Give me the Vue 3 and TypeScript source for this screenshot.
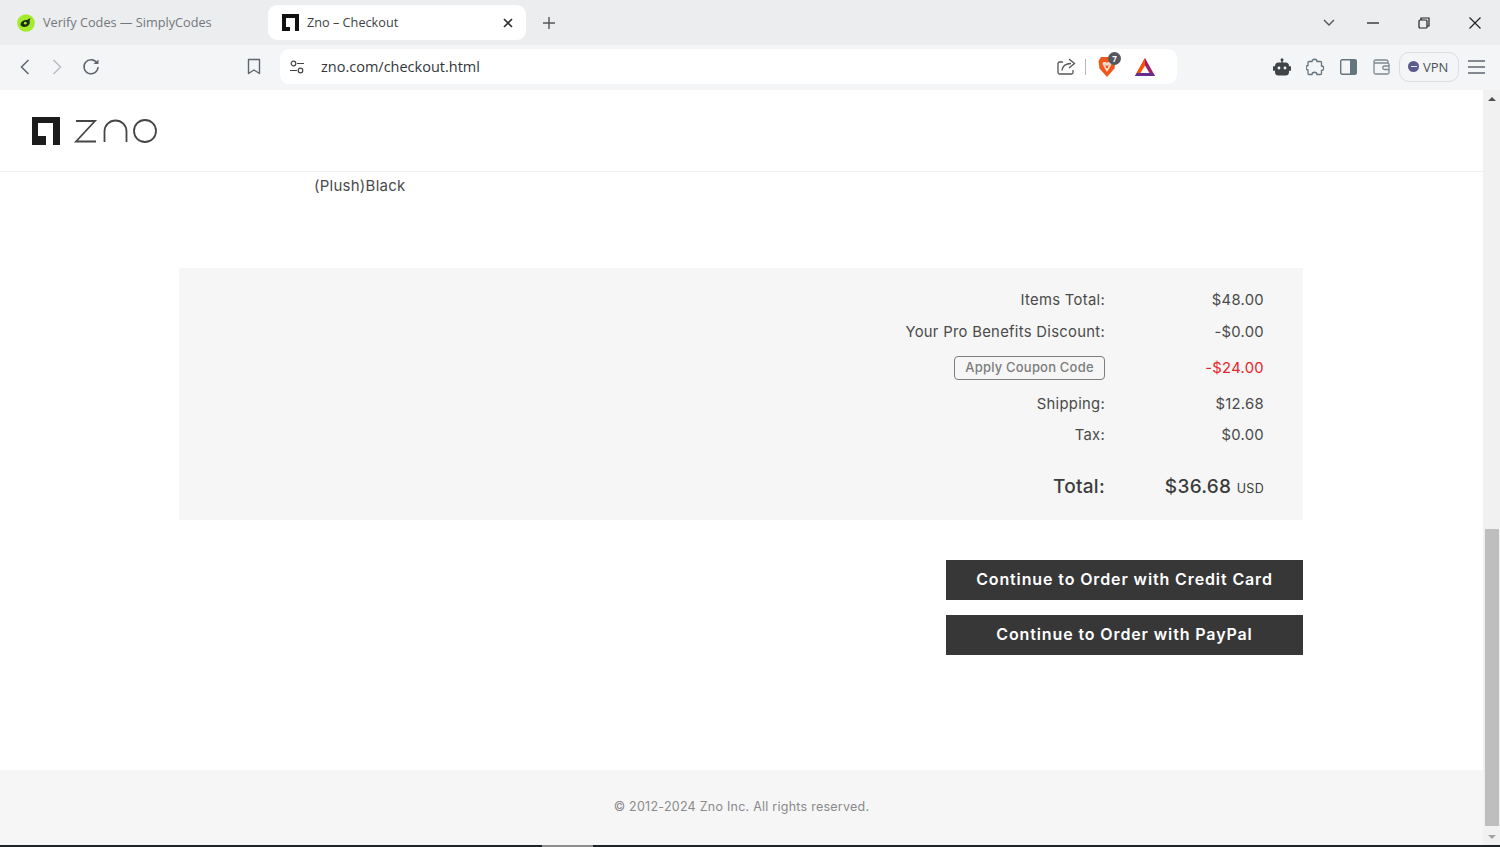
<script setup lang="ts">
interface Row { label: string; value: string; cls: string }
const rows: Row[] = [
  { label: 'Items Total:', value: '$48.00', cls: 'h-a' },
  { label: 'Your Pro Benefits Discount:', value: '-$0.00', cls: 'h-a' },
]
const rowsAfter: Row[] = [
  { label: 'Shipping:', value: '$12.68', cls: 'h-c' },
  { label: 'Tax:', value: '$0.00', cls: 'h-d' },
]
</script>

<template>
  <div class="window">
    <div class="tabstrip">
      <div class="tab inactive">
        <svg class="fav" viewBox="0 0 18 18" width="18" height="18">
          <circle cx="9" cy="9" r="8.800" fill="#a2ec2c" />
          <path d="M3.500 10c.8-3 4-4.300 6.500-4l3.500-2-1 3c1 2.200-.6 5.200-3.800 5.800-2.800.5-5.500-.7-5.200-2.800z" fill="#1d2b12" />
          <circle cx="8.300" cy="9.200" r="1.400" fill="#a2ec2c" />
        </svg>
        <span class="tabtitle muted">Verify Codes — SimplyCodes</span>
      </div>
      <div class="tab active">
        <svg class="fav" viewBox="0 0 17 17" width="17" height="17">
          <path d="M0 0h17v17h-4V4H4v9h4v4H0z" fill="#111" />
        </svg>
        <span class="tabtitle">Zno – Checkout</span>
        <svg class="tabclose" viewBox="0 0 10 10" width="10" height="10">
          <path d="M1 1l8 8M9 1l-8 8" stroke="#333" stroke-width="1.700" fill="none" />
        </svg>
      </div>
      <svg class="newtab" viewBox="0 0 12 12" width="12" height="12">
        <path d="M6 0v12M0 6h12" stroke="#555" stroke-width="1.400" fill="none" />
      </svg>
      <div class="strip-right">
        <svg viewBox="0 0 12 8" width="12" height="8"><path d="M1 1l5 5 5-5" stroke="#555" stroke-width="1.400" fill="none" /></svg>
        <svg class="min" viewBox="0 0 12 2" width="12" height="2"><path d="M0 1h12" stroke="#222" stroke-width="1.300" /></svg>
        <svg class="rest" viewBox="0 0 12 12" width="12" height="12">
          <path d="M3 3V1h8v8H9" stroke="#222" stroke-width="1.200" fill="none" />
          <rect x="1" y="3" width="8" height="8" rx="1" stroke="#222" stroke-width="1.200" fill="none" />
        </svg>
        <svg class="cls" viewBox="0 0 12 12" width="12" height="12"><path d="M.5.5l11 11M11.500.5l-11 11" stroke="#222" stroke-width="1.200" fill="none" /></svg>
      </div>
    </div>

    <div class="toolbar">
      <svg class="back" viewBox="0 0 10 16" width="10" height="16"><path d="M8.500 1L1.500 8l7 7" stroke="#5f6670" stroke-width="1.500" fill="none" /></svg>
      <svg class="fwd" viewBox="0 0 10 16" width="10" height="16"><path d="M1.500 1l7 7-7 7" stroke="#b9bec4" stroke-width="1.500" fill="none" /></svg>
      <svg class="reload" viewBox="0 0 18 18" width="18" height="18">
        <path d="M15 5.200A7 7 0 1 0 16 9" stroke="#5f6670" stroke-width="1.500" fill="none" />
        <path d="M11.500 6h5V1.500z" fill="#5f6670" />
      </svg>
      <svg class="bookmark" viewBox="0 0 14 17" width="14" height="17"><path d="M1.500 1.500h11v14L7 12l-5.500 3.500z" stroke="#5f6670" stroke-width="1.400" fill="none" stroke-linejoin="round" /></svg>
      <div class="omnibox">
        <svg class="tune" viewBox="0 0 14 14" width="14" height="14">
          <circle cx="3.500" cy="3.500" r="2.300" stroke="#444" stroke-width="1.200" fill="none" />
          <circle cx="10.500" cy="10.500" r="2.300" stroke="#444" stroke-width="1.200" fill="none" />
          <path d="M7 3.500h7M0 10.500h7" stroke="#444" stroke-width="1.200" />
        </svg>
        <span class="url">zno.com/checkout.html</span>
        <svg class="share" viewBox="0 0 19 17" width="19" height="17">
          <path d="M6 4H2.500A1.500 1.500 0 0 0 1 5.500v9A1.500 1.500 0 0 0 2.500 16h12a1.500 1.500 0 0 0 1.500-1.500V12" stroke="#555" stroke-width="1.300" fill="none" />
          <path d="M5 12.500C5.500 8 9 5.500 14 5.500M12 1l5.500 4.500L12 10" stroke="#555" stroke-width="1.300" fill="none" />
        </svg>
        <span class="sep"></span>
        <div class="brave">
          <svg viewBox="0 0 18 22" width="18" height="22">
            <path d="M3 1h12l2.500 4-1 7.500L9 21 1.500 12.500.5 5z" fill="#f0571f" />
            <path d="M5 6h3l1 1 1-1h3l.5 2-2 4-2.500 4-2.500-4-2-4z" fill="#fbd9c9" />
            <path d="M7.500 8.500L9 10l1.500-1.500-.5 3.500H8z" fill="#f0571f" />
          </svg>
          <span class="badge">7</span>
        </div>
        <svg class="bat" viewBox="0 0 20 18" width="20" height="18">
          <path d="M10 0l10 18H0z" fill="#9e1f63" />
          <path d="M10 0L0 18h5.500L10 9z" fill="#ff5000" />
          <path d="M0 18h20l-2-3H2z" fill="#662d91" />
          <path d="M10 7.500L14.500 15h-9z" fill="#fff" />
        </svg>
      </div>
      <div class="tools">
        <svg class="t-bot" viewBox="0 0 18 18" width="18" height="18">
          <circle cx="9" cy="1.800" r="1.500" fill="#3f4448" />
          <rect x="8.300" y="2" width="1.400" height="3" fill="#3f4448" />
          <rect x="2" y="4.500" width="14" height="13" rx="3.500" fill="#3f4448" />
          <rect x="0" y="8" width="2" height="5" rx="1" fill="#3f4448" />
          <rect x="16" y="8" width="2" height="5" rx="1" fill="#3f4448" />
          <circle cx="6" cy="10" r="1.400" fill="#f3f5f7" />
          <circle cx="12" cy="10" r="1.400" fill="#f3f5f7" />
        </svg>
        <svg class="t-puz" viewBox="0 0 18 18" width="18" height="18">
          <path d="M6 3.500c0-3 5-3 5 0h3.500a1 1 0 0 1 1 1V8c3 0 3 4.500 0 4.500v3a1 1 0 0 1-1 1h-3.500c0-3-5-3-5 0H3a1 1 0 0 1-1-1v-3.500c-2.500 0-2.500-4.500 0-4.500V4.500a1 1 0 0 1 1-1z" stroke="#66747e" stroke-width="1.300" fill="none" />
        </svg>
        <svg class="t-side" viewBox="0 0 17 16" width="17" height="16">
          <rect x=".7" y=".7" width="15.600" height="14.600" rx="1.500" stroke="#66747e" stroke-width="1.400" fill="none" />
          <rect x="10" y="1" width="6.500" height="14" fill="#66747e" />
        </svg>
        <svg class="t-wal" viewBox="0 0 17 16" width="17" height="16">
          <path d="M15 3.500v-1A1.500 1.500 0 0 0 13.500 1h-11A1.500 1.500 0 0 0 1 2.500v11A1.500 1.500 0 0 0 2.500 15h12a1.500 1.500 0 0 0 1.500-1.500v-8A1.500 1.500 0 0 0 14.500 4h-13" stroke="#7d8a93" stroke-width="1.300" fill="none" />
          <path d="M16 7h-4.500a1.500 1.500 0 0 0 0 3.500H16" stroke="#7d8a93" stroke-width="1.300" fill="none" />
        </svg>
        <div class="vpn">
          <span class="vpn-dot"><i></i></span>
          <span>VPN</span>
        </div>
        <svg class="t-menu" viewBox="0 0 17 14" width="17" height="14"><path d="M0 1h17M0 7h17M0 13h17" stroke="#5f6670" stroke-width="1.300" /></svg>
      </div>
    </div>

    <div class="viewport">
      <div class="page">
        <header class="site-header">
          <svg class="logo" viewBox="0 0 125 28" width="125" height="28" role="img" aria-label="zno">
            <path d="M0 0h28v28h-7V6H6v13h8v9H0z" fill="#1c1c1c" />
            <path d="M44 4h19L44 24.500h20" stroke="#454545" stroke-width="1.800" fill="none" />
            <path d="M72.500 25V14.500a11 11 0 0 1 22 0V25" stroke="#454545" stroke-width="1.800" fill="none" />
            <circle cx="113" cy="14" r="11" stroke="#454545" stroke-width="1.800" fill="none" />
          </svg>
        </header>

        <main class="content">
          <p class="variant">(Plush)Black</p>

          <section class="summary">
            <div v-for="r in rows" :key="r.label" class="row" :class="r.cls">
              <span class="label">{{ r.label }}</span>
              <span class="value">{{ r.value }}</span>
            </div>
            <div class="row h-b">
              <span class="label"><button class="coupon" type="button">Apply Coupon Code</button></span>
              <span class="value red">-$24.00</span>
            </div>
            <div v-for="r in rowsAfter" :key="r.label" class="row" :class="r.cls">
              <span class="label">{{ r.label }}</span>
              <span class="value">{{ r.value }}</span>
            </div>
            <div class="row total">
              <span class="label">Total:</span>
              <span class="value"><b>$36.68</b> <small>USD</small></span>
            </div>
          </section>

          <div class="actions">
            <button class="cta" type="button">Continue to Order with Credit Card</button>
            <button class="cta" type="button">Continue to Order with PayPal</button>
          </div>
        </main>

        <footer class="site-footer">© 2012-2024 Zno Inc. All rights reserved.</footer>
      </div>

      <div class="scrollbar">
        <span class="arrow up"></span>
        <span class="thumb"></span>
        <span class="arrow down"></span>
      </div>
    </div>

    <div class="taskbar"><span></span></div>
  </div>
</template>

<style>
html, body { margin: 0; height: 100%; overflow: hidden; background: #fff; }
</style>

<style scoped>
.window {
  width: 1500px;
  height: 847px;
  display: flex;
  flex-direction: column;
  overflow: hidden;
  font-family: "Open Sans", "Noto Sans", sans-serif;
}
.tabstrip {
  height: 45px;
  background: #ebedef;
  display: flex;
  align-items: center;
  flex: none;
}
.tab {
  display: flex;
  align-items: center;
  height: 35px;
  box-sizing: border-box;
}
.tab.inactive { width: 268px; padding-left: 17px; }
.tab.active {
  width: 258px;
  background: #fff;
  border-radius: 9px;
  padding-left: 14px;
}
.fav { flex: none; }
.tabtitle { font-size: 12.700px; color: #3c3f43; margin-left: 8px; margin-bottom: 2px; white-space: nowrap; }
.tabtitle.muted { color: #73777c; }
.tabclose { margin-left: auto; margin-right: 13px; }
.newtab { margin-left: 17px; }
.strip-right {
  margin-left: auto;
  display: flex;
  align-items: center;
  padding-right: 19px;
}
.strip-right .min { margin-left: 32px; }
.strip-right .rest { margin-left: 39px; }
.strip-right .cls { margin-left: 39px; }

.toolbar {
  height: 45px;
  box-sizing: border-box;
  padding-bottom: 2px;
  background: #f3f5f7;
  display: flex;
  align-items: center;
  flex: none;
}
.back { margin-left: 20px; }
.fwd { margin-left: 22px; }
.reload { margin-left: 20px; }
.bookmark { margin-left: 147px; }
.omnibox {
  margin-left: 19px;
  width: 897px;
  height: 35px;
  background: #fff;
  border-radius: 9px;
  display: flex;
  align-items: center;
  box-sizing: border-box;
  padding-left: 10px;
}
.url { margin-left: 17px; font-size: 14.500px; color: #33373b; }
.share { margin-left: auto; }
.sep { width: 1px; height: 16px; background: #b5b8bb; margin-left: 9px; }
.brave { position: relative; margin-left: 12px; height: 22px; }
.brave svg { display: block; }
.badge {
  position: absolute;
  left: 10px;
  top: -4px;
  width: 13px;
  height: 13px;
  border-radius: 50%;
  background: #54585e;
  color: #fff;
  font-size: 8px;
  font-weight: 700;
  line-height: 13px;
  text-align: center;
}
.bat { margin-left: 19px; margin-right: 22px; }
.tools { display: flex; align-items: center; flex: none; margin-left: 96px; }
.t-puz { margin-left: 15px; }
.t-side { margin-left: 16px; }
.t-wal { margin-left: 16px; }
.vpn {
  margin-left: 9px;
  width: 60px;
  height: 30px;
  border: 1px solid #d9dde1;
  border-radius: 10px;
  box-sizing: border-box;
  display: flex;
  align-items: center;
  padding-left: 8px;
  gap: 4px;
  font-size: 13px;
  color: #4c5258;
}
.vpn-dot {
  width: 11px;
  height: 11px;
  border-radius: 50%;
  background: #5b5a8a;
  display: flex;
  align-items: center;
  justify-content: center;
}
.vpn-dot i { display: block; width: 6px; height: 1.500px; background: #e8e8f0; }
.t-menu { margin-left: 9px; }

.viewport { flex: 1; display: flex; min-height: 0; }
.page { flex: 1; display: flex; flex-direction: column; min-width: 0; background: #fff; }
.site-header {
  height: 82px;
  flex: none;
  border-bottom: 1px solid #f0f0f0;
  box-sizing: border-box;
  display: flex;
  align-items: center;
  padding-left: 32px;
}
.logo { display: block; }
.content {
  flex: 1;
  display: flex;
  flex-direction: column;
  padding: 0 180px 0 179px;
  font-family: "Inter", sans-serif;
  color: #4a4a4a;
}
.variant {
  margin: 5px 0 0 135px;
  font-size: 15px;
  letter-spacing: .25px;
  line-height: 18px;
  height: 91px;
}
.summary {
  background: #f6f6f6;
  height: 252px;
  box-sizing: border-box;
  padding-top: 16px;
  display: flex;
  flex-direction: column;
}
.row {
  display: flex;
  justify-content: flex-end;
  align-items: center;
  font-size: 14.800px;
  letter-spacing: .3px;
  padding-right: 39px;
}
.h-a { height: 32px; }
.h-b { height: 39px; }
.h-c { height: 34px; }
.h-d { height: 28px; }
.label { text-align: right; }
.value { width: 159px; text-align: right; }
.red { color: #e6252b; }
.coupon {
  width: 151px;
  height: 24px;
  padding: 0 0 2px;
  background: transparent;
  border: 1px solid #7d7d7d;
  border-radius: 4px;
  font: inherit;
  font-size: 13px;
  font-weight: 500;
  letter-spacing: .2px;
  color: #7d7d7d;
  display: block;
}
.total { height: 48px; margin-top: 13px; font-size: 19px; font-weight: 500; color: #3c3c3c; }
.total b { font-weight: 500; font-size: 19px; }
.total small { font-size: 12.500px; font-weight: 400; }
.actions {
  margin-top: 40px;
  display: flex;
  flex-direction: column;
  align-items: flex-end;
  gap: 15px;
}
.cta {
  width: 357px;
  height: 40px;
  background: #373737;
  color: #fff;
  border: 0;
  border-radius: 0;
  font-family: inherit;
  font-size: 16px;
  font-weight: 600;
  letter-spacing: .88px;
  padding: 0 0 2px;
}
.site-footer {
  margin-top: auto;
  height: 75px;
  flex: none;
  background: #f6f6f6;
  color: #8a8a8a;
  font-family: "Inter", sans-serif;
  font-size: 12.500px;
  letter-spacing: .25px;
  display: flex;
  align-items: center;
  justify-content: center;
  box-sizing: border-box;
  padding-bottom: 3px;
}
.scrollbar {
  width: 17px;
  flex: none;
  background: #f1f1f1;
  display: flex;
  flex-direction: column;
  align-items: center;
}
.arrow { width: 0; height: 0; border-left: 4px solid transparent; border-right: 4px solid transparent; flex: none; }
.arrow.up { border-bottom: 4px solid #505050; margin-top: 7px; }
.arrow.down { border-top: 4px solid #a3a3a3; margin-bottom: 6px; }
.thumb { width: 14px; height: 297px; background: #bebebe; margin-top: auto; margin-bottom: 9px; flex: none; }
.taskbar { height: 2px; background: #1f2326; flex: none; display: flex; }
.taskbar span { margin-left: 542px; width: 51px; background: #8b8d8f; }
</style>
